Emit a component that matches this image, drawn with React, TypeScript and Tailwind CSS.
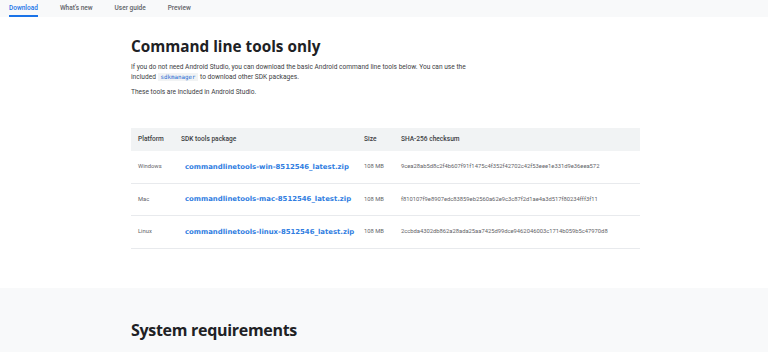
import React from "react";

const rows = [
  {
    p: "Windows",
    f: "commandlinetools-win-8512546_latest.zip",
    s: "108 MB",
    h: "9cea28ab5d8c2f4b607f91f1475c4f352f42702c42f53eee1e331d9e36eea572",
  },
  {
    p: "Mac",
    f: "commandlinetools-mac-8512546_latest.zip",
    s: "108 MB",
    h: "f810107f9e8907edc83859eb2560a62e9c3c87f2d1ae4a3d517f80234fff3f11",
  },
  {
    p: "Linux",
    f: "commandlinetools-linux-8512546_latest.zip",
    s: "108 MB",
    h: "2ccbda4302db862a28ada25aa7425d99dce9462046003c1714b059b5c47970d8",
  },
];

export default function App() {
  return (
    <div className="w-[768px] h-[352px] overflow-hidden bg-white font-['Roboto',sans-serif]">
      <div className="h-[17px] bg-[#f8f9fa] flex pl-[9px] gap-[22px] text-[6.5px]">
        <div className="relative text-[#1a73e8] font-medium pt-[4px]">
          Download
          <div className="absolute left-0 right-0 bottom-0 h-[2px] bg-[#1a73e8]" />
        </div>
        <div className="text-[#5f6368] font-medium pt-[4px]">What's new</div>
        <div className="text-[#5f6368] font-medium pt-[4px]">User guide</div>
        <div className="text-[#5f6368] font-medium pt-[4px]">Preview</div>
      </div>
      <div className="pl-[131px] pr-[128px]">
        <h1 className="mt-[19px] text-[15.3px] leading-[20px] font-bold text-[#202124] font-['Open_Sans',sans-serif]">
          Command line tools only
        </h1>
        <p className="mt-[6px] text-[6.6px] leading-[10px] text-[#3c4043] w-[340px]">
          If you do not need Android Studio, you can download the basic Android command line tools below. You can use the included{" "}
          <code className="inline-block align-middle font-['DejaVu_Sans_Mono',monospace] text-[#1967d2] bg-[#f1f3f4] px-[3px] text-[5.8px] leading-[8px]">sdkmanager</code>{" "}
          to download other SDK packages.
        </p>
        <p className="mt-[5px] text-[6.6px] leading-[10px] text-[#3c4043]">
          These tools are included in Android Studio.
        </p>
        <div className="mt-[31px] w-[509px]">
          <div className="h-[23px] bg-[#f1f3f4] flex items-center text-[6.6px] font-medium text-[#3c4043]">
            <div className="w-[50px] pl-[7px]">Platform</div>
            <div className="w-[183px]">SDK tools package</div>
            <div className="w-[37px]">Size</div>
            <div>SHA-256 checksum</div>
          </div>
          {rows.map((r) => (
            <div key={r.p} className="h-[32.5px] flex items-center border-b border-[#e8eaed] text-[5.8px] text-[#5f6368]">
              <div className="w-[50px] pl-[7px]">{r.p}</div>
              <div className="w-[183px] pl-[4px] text-[6.9px] font-bold text-[#2f7de1] font-['DejaVu_Sans',sans-serif]">{r.f}</div>
              <div className="w-[37px]">{r.s}</div>
              <div>{r.h}</div>
            </div>
          ))}
        </div>
      </div>
      <div className="mt-[39px] bg-[#f8f9fa] h-[80px] pl-[131px] pt-[32px]">
        <h2 className="text-[16px] leading-[20px] font-bold text-[#202124] font-['Open_Sans',sans-serif] tracking-[-0.3px]">
          System requirements
        </h2>
      </div>
    </div>
  );
}
